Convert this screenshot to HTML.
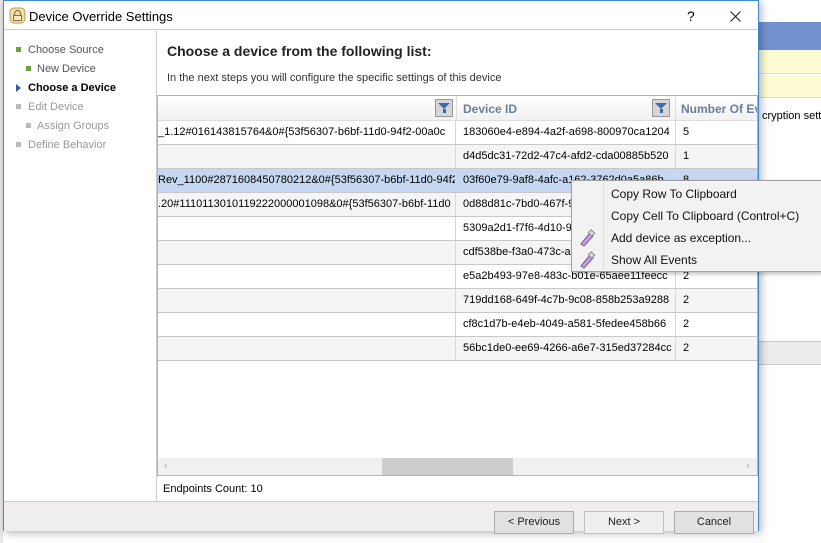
<!DOCTYPE html>
<html><head><style>
*{margin:0;padding:0;box-sizing:border-box}
body{width:821px;height:543px;overflow:hidden;background:#fff;font-family:"Liberation Sans",sans-serif;font-size:12px;color:#000;position:relative}
.abs{position:absolute}
.dlg{left:3px;top:0;width:756px;height:531px;border:1px solid #3c8ad6;background:#fff;box-shadow:2px 2px 8px rgba(0,0,0,.3)}
.row{position:absolute;left:0;width:600px;height:24px;border-bottom:1px solid #c8c8c8;white-space:nowrap;font-size:11px;line-height:23px}
.row span{position:absolute;top:0;overflow:hidden;height:23px}
.c1{left:0;width:298px;border-right:1px solid #d8d8d8}
.c2{left:298px;width:220px;padding-left:7px;border-right:1px solid #d8d8d8}
.c3{left:518px;width:82px;padding-left:7px}
.btn{position:absolute;top:510px;width:80px;height:23px;border:1px solid #adadad;background:#e1e1e1;font-size:11px;text-align:center;line-height:21px;color:#222}
.mi{position:absolute;left:39px;font-size:12px;color:#111}
</style></head><body>
<div class="abs" style="left:0;top:0;width:3px;height:543px;background:#e8e8e8"></div>
<div class="abs" style="left:758px;top:22px;width:63px;height:28px;background:#7491cf"></div>
<div class="abs" style="left:758px;top:50px;width:63px;height:24px;background:#fdfbd2;border-bottom:1px solid #e8e0a0"></div>
<div class="abs" style="left:758px;top:75px;width:63px;height:23px;background:#fdfbd2;border-bottom:1px solid #e8e0a0"></div>
<div class="abs" style="left:762px;top:110px;font-size:11px;white-space:nowrap">cryption sett</div>
<div class="abs" style="left:758px;top:341px;width:63px;height:24px;background:#ececec;border-top:1px solid #ccc;border-bottom:1px solid #ccc"></div>
<div class="dlg abs">
 <div class="abs" style="left:0;top:0;width:754px;height:29px;border-bottom:1px solid #ccc;background:#fff">
  <svg class="abs" style="left:5px;top:6px" width="17" height="17" viewBox="0 0 17 17"><rect x="1" y="1" width="15" height="15" rx="4" fill="#f3dfa8" stroke="#b99a55"/><path d="M5.5 9V6.5a3 3 0 0 1 6 0V9" fill="none" stroke="#8a7040" stroke-width="1.2"/><rect x="4.5" y="8.5" width="8" height="5" fill="#f7e9c0" stroke="#8a7040"/></svg>
  <div class="abs" style="left:25px;top:8px;font-size:13px">Device Override Settings</div>
  <div class="abs" style="left:683px;top:7px;font-size:14px">?</div>
  <svg class="abs" style="left:726px;top:10px" width="11" height="11" viewBox="0 0 11 11"><path d="M0.5 0.5L10.5 10.5M10.5 0.5L0.5 10.5" stroke="#222" stroke-width="1.1"/></svg>
 </div>
 <div class="abs" style="left:0;top:30px;width:153px;height:470px;border-right:1px solid #ccc">
  <div class="abs" style="left:12px;top:16px;width:5px;height:5px;background:#6aa23a"></div><div class="abs" style="left:24px;top:13px;color:#555;font-size:11px">Choose Source</div>
  <div class="abs" style="left:22px;top:35px;width:5px;height:5px;background:#6aa23a"></div><div class="abs" style="left:33px;top:32px;color:#555;font-size:11px">New Device</div>
  <div class="abs" style="left:12px;top:53px;width:0;height:0;border-left:5px solid #3b5ba8;border-top:4px solid transparent;border-bottom:4px solid transparent"></div><div class="abs" style="left:24px;top:51px;font-weight:bold;font-size:11px">Choose a Device</div>
  <div class="abs" style="left:12px;top:73px;width:5px;height:5px;background:#bbb"></div><div class="abs" style="left:24px;top:70px;color:#999;font-size:11px">Edit Device</div>
  <div class="abs" style="left:22px;top:92px;width:5px;height:5px;background:#bbb"></div><div class="abs" style="left:33px;top:89px;color:#999;font-size:11px">Assign Groups</div>
  <div class="abs" style="left:12px;top:111px;width:5px;height:5px;background:#bbb"></div><div class="abs" style="left:24px;top:108px;color:#999;font-size:11px">Define Behavior</div>
 </div>
 <div class="abs" style="left:163px;top:42px;font-size:14px;font-weight:bold;color:#222">Choose a device from the following list:</div>
 <div class="abs" style="left:163px;top:71px;font-size:11px;color:#333">In the next steps you will configure the specific settings of this device</div>
 <div class="abs" style="left:153px;top:94px;width:601px;height:381px;border:1px solid #a8b4c4;overflow:hidden;background:#fff">
  <div class="abs" style="left:0;top:0;width:600px;height:25px;background:linear-gradient(#fff,#f1f1f1);border-bottom:1px solid #ddd">
   <div class="abs" style="left:277px;top:3px;width:18px;height:18px;background:#d6d6d6;border:1px solid #999"><div style="margin:3px auto 0;width:0;height:0;border-left:6px solid transparent;border-right:6px solid transparent;border-top:6px solid #3a6ab0"></div><div style="margin:0 auto;width:3px;height:4px;background:#3a6ab0"></div></div>
   <div class="abs" style="left:298px;top:0;height:25px;border-left:1px solid #ddd"></div>
   <div class="abs" style="left:305px;top:6px;font-weight:bold;color:#6a7f9a;font-size:12px">Device ID</div>
   <div class="abs" style="left:494px;top:3px;width:18px;height:18px;background:#d6d6d6;border:1px solid #999"><div style="margin:3px auto 0;width:0;height:0;border-left:6px solid transparent;border-right:6px solid transparent;border-top:6px solid #3a6ab0"></div><div style="margin:0 auto;width:3px;height:4px;background:#3a6ab0"></div></div>
   <div class="abs" style="left:517px;top:0;height:25px;border-left:1px solid #ddd"></div>
   <div class="abs" style="left:523px;top:6px;font-weight:bold;color:#6a7f9a;font-size:12px;white-space:nowrap">Number Of Ev</div>
  </div>
  <div class="row" style="top:25px"><span class="c1">_1.12#016143815764&amp;0#{53f56307-b6bf-11d0-94f2-00a0c</span><span class="c2">183060e4-e894-4a2f-a698-800970ca1204</span><span class="c3">5</span></div>
  <div class="row" style="top:49px;background:#f5f5f5"><span class="c1"></span><span class="c2">d4d5dc31-72d2-47c4-afd2-cda00885b520</span><span class="c3">1</span></div>
  <div class="row" style="top:73px;background:#c6d7f2"><span class="c1">Rev_1100#2871608450780212&amp;0#{53f56307-b6bf-11d0-94f2</span><span class="c2">03f60e79-9af8-4afc-a162-3762d0a5a86b</span><span class="c3">8</span></div>
  <div class="row" style="top:97px;background:#f5f5f5"><span class="c1">.20#1110113010119222000001098&amp;0#{53f56307-b6bf-11d0</span><span class="c2">0d88d81c-7bd0-467f-9</span><span class="c3"></span></div>
  <div class="row" style="top:121px"><span class="c1"></span><span class="c2">5309a2d1-f7f6-4d10-9</span><span class="c3"></span></div>
  <div class="row" style="top:145px;background:#f5f5f5"><span class="c1"></span><span class="c2">cdf538be-f3a0-473c-a</span><span class="c3"></span></div>
  <div class="row" style="top:169px"><span class="c1"></span><span class="c2">e5a2b493-97e8-483c-b01e-65aee11feecc</span><span class="c3">2</span></div>
  <div class="row" style="top:193px;background:#f5f5f5"><span class="c1"></span><span class="c2">719dd168-649f-4c7b-9c08-858b253a9288</span><span class="c3">2</span></div>
  <div class="row" style="top:217px"><span class="c1"></span><span class="c2">cf8c1d7b-e4eb-4049-a581-5fedee458b66</span><span class="c3">2</span></div>
  <div class="row" style="top:241px;background:#f5f5f5"><span class="c1"></span><span class="c2">56bc1de0-ee69-4266-a6e7-315ed37284cc</span><span class="c3">2</span></div>
  <div class="abs" style="left:0;top:362px;width:600px;height:18px;background:#f0f0f0">
   <div class="abs" style="left:224px;top:0;width:131px;height:18px;background:#cdcdcd"></div>
   <div class="abs" style="left:6px;top:2px;color:#aaa;font-size:11px">‹</div>
   <div class="abs" style="left:588px;top:2px;color:#aaa;font-size:11px">›</div>
  </div>
 </div>
 <div class="abs" style="left:159px;top:482px;font-size:11px">Endpoints Count: 10</div>
 <div class="abs" style="left:0;top:500px;width:754px;height:30px;background:#f0edef;border-top:1px solid #ccc"></div>
 <div class="btn" style="left:490px">&lt; Previous</div>
 <div class="btn" style="left:580px;background:#efefef;border-color:#c0c0c0">Next &gt;</div>
 <div class="btn" style="left:670px">Cancel</div>
</div>
<div class="abs" style="left:571px;top:180px;width:252px;height:92px;background:#f2f2f2;border:1px solid #a0a0a0;box-shadow:2px 2px 4px rgba(0,0,0,.25)">
 <div class="abs" style="left:31px;top:2px;height:86px;border-left:1px solid #ddd"></div>
 <div class="mi" style="top:6px">Copy Row To Clipboard</div>
 <div class="mi" style="top:28px">Copy Cell To Clipboard (Control+C)</div>
 <svg class="abs" style="left:6px;top:48px" width="18" height="18" viewBox="0 0 18 18"><path d="M3 15 L12 4 L15 7 L6 17 Z" fill="#c9a0e8" stroke="#7a5a98"/><rect x="11" y="2" width="5" height="4" transform="rotate(45 13.5 4)" fill="#ddd" stroke="#888"/></svg>
 <div class="mi" style="top:50px">Add device as exception...</div>
 <svg class="abs" style="left:6px;top:70px" width="18" height="18" viewBox="0 0 18 18"><path d="M3 15 L12 4 L15 7 L6 17 Z" fill="#c9a0e8" stroke="#7a5a98"/><rect x="11" y="2" width="5" height="4" transform="rotate(45 13.5 4)" fill="#ddd" stroke="#888"/></svg>
 <div class="mi" style="top:72px">Show All Events</div>
</div>
</body></html>
